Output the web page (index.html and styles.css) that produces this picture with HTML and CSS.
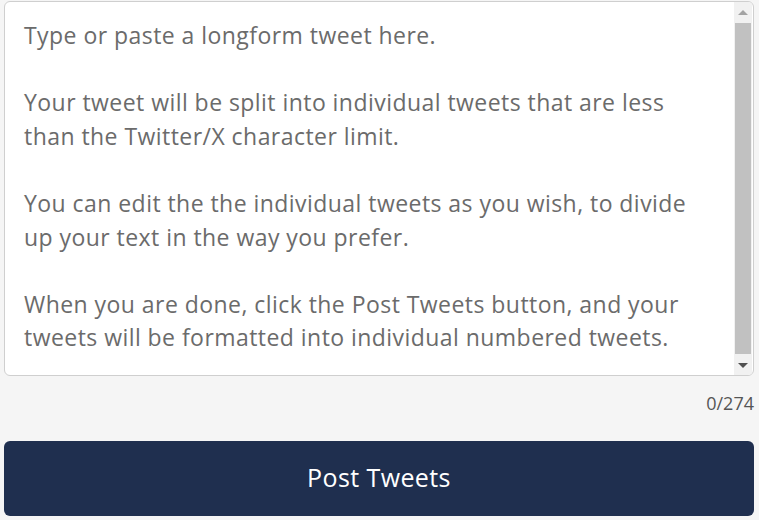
FILE: index.html
```html
<!DOCTYPE html>
<html lang="en">
<head>
<meta charset="utf-8">
<title>Tweet splitter</title>
<link rel="stylesheet" href="styles.css">
</head>
<body>
<main class="app">
  <div class="editor">
    <div class="editor-text">
      <p>Type or paste a longform tweet here.</p>
      <p>Your tweet will be split into individual tweets that are less<br>than the Twitter/X character limit.</p>
      <p>You can edit the the individual tweets as you wish, to divide<br>up your text in the way you prefer.</p>
      <p>When you are done, click the Post Tweets button, and your<br>tweets will be formatted into individual numbered tweets.</p>
    </div>
    <div class="scrollbar">
      <div class="scroll-arrow up"></div>
      <div class="scroll-track"><div class="scroll-thumb"></div></div>
      <div class="scroll-arrow down"></div>
    </div>
  </div>
  <div class="counter">0/274</div>
  <button class="post-btn" type="button">Post Tweets</button>
</main>
</body>
</html>
```
FILE: styles.css
```css
html, body {
  margin: 0;
  padding: 0;
  background: #f5f5f5;
}
.app {
  padding: 1px 5px 0 4px;
  font-family: "Open Sans", "Liberation Sans", sans-serif;
}
.editor {
  display: flex;
  height: 375px;
  box-sizing: border-box;
  background: #fff;
  border: 1px solid #cfcfcf;
  border-radius: 6px;
  overflow: hidden;
}
.editor-text {
  flex: 1;
  padding: 17px 19px 18px;
  color: #6b6b6b;
  font-size: 23px;
  letter-spacing: 0.45px;
  line-height: 33.6px;
  white-space: nowrap;
}
.editor-text p {
  margin: 0 0 33.6px;
}
.scrollbar {
  width: 18px;
  margin: 0 1px 0 0;
  background: #f1f1f1;
  display: flex;
  flex-direction: column;
}
.scroll-arrow {
  height: 20px;
  display: flex;
  align-items: center;
  justify-content: center;
}
.scroll-arrow::before {
  content: "";
  width: 0;
  height: 0;
  border-left: 5px solid transparent;
  border-right: 5px solid transparent;
}
.scroll-arrow.up::before {
  border-bottom: 5px solid #a3a3a3;
}
.scroll-arrow.down::before {
  border-top: 5px solid #505050;
}
.scroll-track {
  flex: 1;
  display: flex;
  padding: 1px 1px;
}
.scroll-thumb {
  flex: 1;
  background: #c1c1c1;
}
.counter {
  margin-top: 16px;
  text-align: right;
  color: #555;
  font-size: 18px;
  line-height: 22px;
}
.post-btn {
  display: block;
  width: 100%;
  margin-top: 27px;
  height: 75px;
  padding: 0 0 3px;
  border: none;
  border-radius: 6px;
  background: #1f2f4f;
  color: #fff;
  font-family: inherit;
  font-size: 25px;
  letter-spacing: 0.4px;
}
```
